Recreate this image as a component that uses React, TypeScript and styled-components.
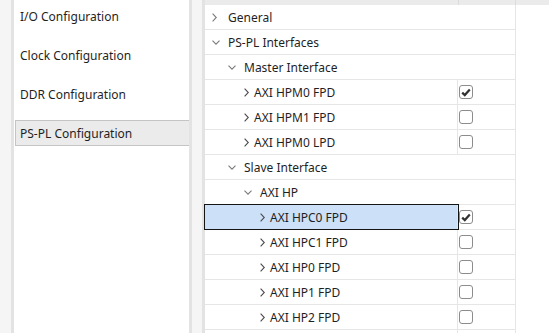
import { createGlobalStyle } from "styled-components";
import styled from "styled-components";

const GlobalStyle = createGlobalStyle`
  html, body {
    margin: 0;
    padding: 0;
    background: #f5f5f5;
    font-family: "Noto Sans", "Open Sans", sans-serif;
    font-size: 12px;
    color: #1f1f1f;
  }
`;

const Layout = styled.div`
  display: flex;
  height: 333px;
  overflow: hidden;
`;

const Sidebar = styled.nav`
  margin-left: 11px;
  width: 175px;
  border-left: 3px solid #e3e3e3;
  border-right: 3px solid #e3e3e3;
  background: #fff;
  display: flex;
  flex-direction: column;
  gap: 13px;
  padding-top: 3px;
`;

const SideItem = styled.div<{ $active?: boolean }>`
  height: 26px;
  box-sizing: border-box;
  display: flex;
  align-items: center;
  margin-left: 1px;
  padding-left: ${p => (p.$active ? "4px" : "5px")};
  border: ${p => (p.$active ? "1px solid #c4c4c4" : "none")};
  border-right: none;
  background: ${p => (p.$active ? "#ebebeb" : "transparent")};
  white-space: nowrap;
`;

const TreePanel = styled.section`
  margin-left: 10px;
  flex: 1;
  border-left: 3px solid #e3e3e3;
  background: #fff;
  display: flex;
  flex-direction: column;
`;

const Header = styled.div`
  height: 5px;
  background: #ebebeb;
  display: flex;
  flex-shrink: 0;
`;

const HeaderCell = styled.div<{ $w: number }>`
  width: ${p => p.$w}px;
  border-right: 1px solid #dcdcdc;
`;

const Row = styled.div`
  display: flex;
  width: 311px;
  height: 24px;
  border-bottom: 1px solid #e6e6e6;
  flex-shrink: 0;
`;

const LabelCell = styled.div<{ $span?: boolean; $selected?: boolean }>`
  width: ${p => (p.$span ? "310px" : "253px")};
  border-right: 1px solid #e6e6e6;
  display: flex;
  align-items: center;
  white-space: nowrap;
  background: ${p => (p.$selected ? "#cce0f8" : "transparent")};
  outline: ${p => (p.$selected ? "1px solid #141414" : "none")};
`;

const Indent = styled.span<{ $level: number }>`
  width: ${p => 7 + p.$level * 16}px;
  flex-shrink: 0;
`;

const Expander = styled.span<{ $leaf?: boolean }>`
  width: ${p => (p.$leaf ? "10px" : "16px")};
  flex-shrink: 0;
  display: flex;
  align-items: center;
  color: ${p => (p.$leaf ? "#4a4a4a" : "#7a7a7a")};
`;

const CheckCell = styled.div`
  width: 56px;
  border-right: 1px solid #e6e6e6;
  display: flex;
  align-items: center;
  padding-left: 1px;
`;

const Box = styled.span`
  width: 12px;
  height: 12px;
  border: 1px solid #8c8c8c;
  border-radius: 3px;
  background: #fff;
  display: flex;
  align-items: center;
  justify-content: center;
`;

const Closed = () => (
  <svg width="5" height="9" viewBox="0 0 5 9">
    <path d="M0.6 0.6 L4.3 4.5 L0.6 8.4" fill="none" stroke="currentColor" strokeWidth="1.1" />
  </svg>
);

const Open = () => (
  <svg width="8" height="5" viewBox="0 0 8 5">
    <path d="M0.5 0.7 L4 4.2 L7.5 0.7" fill="none" stroke="currentColor" strokeWidth="1.1" />
  </svg>
);

const CheckBox = ({ checked }: { checked: boolean }) => (
  <Box>
    {checked && (
      <svg width="10" height="9" viewBox="0 0 10 9">
        <path d="M1.2 4.6 L3.8 7.1 L8.8 1.6" fill="none" stroke="#333" strokeWidth="2.2" />
      </svg>
    )}
  </Box>
);

type Node = {
  label: string;
  level: number;
  kind: "open" | "closed" | "leaf";
  checked?: boolean;
  selected?: boolean;
};

const nodes: Node[] = [
  { label: "General", level: 0, kind: "closed" },
  { label: "PS-PL Interfaces", level: 0, kind: "open" },
  { label: "Master Interface", level: 1, kind: "open" },
  { label: "AXI HPM0 FPD", level: 2, kind: "leaf", checked: true },
  { label: "AXI HPM1 FPD", level: 2, kind: "leaf", checked: false },
  { label: "AXI HPM0 LPD", level: 2, kind: "leaf", checked: false },
  { label: "Slave Interface", level: 1, kind: "open" },
  { label: "AXI HP", level: 2, kind: "open" },
  { label: "AXI HPC0 FPD", level: 3, kind: "leaf", checked: true, selected: true },
  { label: "AXI HPC1 FPD", level: 3, kind: "leaf", checked: false },
  { label: "AXI HP0 FPD", level: 3, kind: "leaf", checked: false },
  { label: "AXI HP1 FPD", level: 3, kind: "leaf", checked: false },
  { label: "AXI HP2 FPD", level: 3, kind: "leaf", checked: false },
];

const sections = ["I/O Configuration", "Clock Configuration", "DDR Configuration", "PS-PL Configuration"];

export default function App() {
  return (
    <>
      <GlobalStyle />
      <Layout>
        <Sidebar>
          {sections.map(s => (
            <SideItem key={s} $active={s === "PS-PL Configuration"}>{s}</SideItem>
          ))}
        </Sidebar>
        <TreePanel>
          <Header>
            <HeaderCell $w={253} />
            <HeaderCell $w={56} />
          </Header>
          {nodes.map(n => {
            const leaf = n.kind === "leaf";
            return (
              <Row key={n.label}>
                <LabelCell $span={!leaf} $selected={n.selected}>
                  <Indent $level={n.level} />
                  <Expander $leaf={leaf}>
                    {n.kind === "open" ? <Open /> : <Closed />}
                  </Expander>
                  {n.label}
                </LabelCell>
                {leaf && (
                  <CheckCell>
                    <CheckBox checked={!!n.checked} />
                  </CheckCell>
                )}
              </Row>
            );
          })}
          {/* next row, scrolled just out of view */}
          <Row>
            <LabelCell />
            <CheckCell />
          </Row>
        </TreePanel>
      </Layout>
    </>
  );
}
